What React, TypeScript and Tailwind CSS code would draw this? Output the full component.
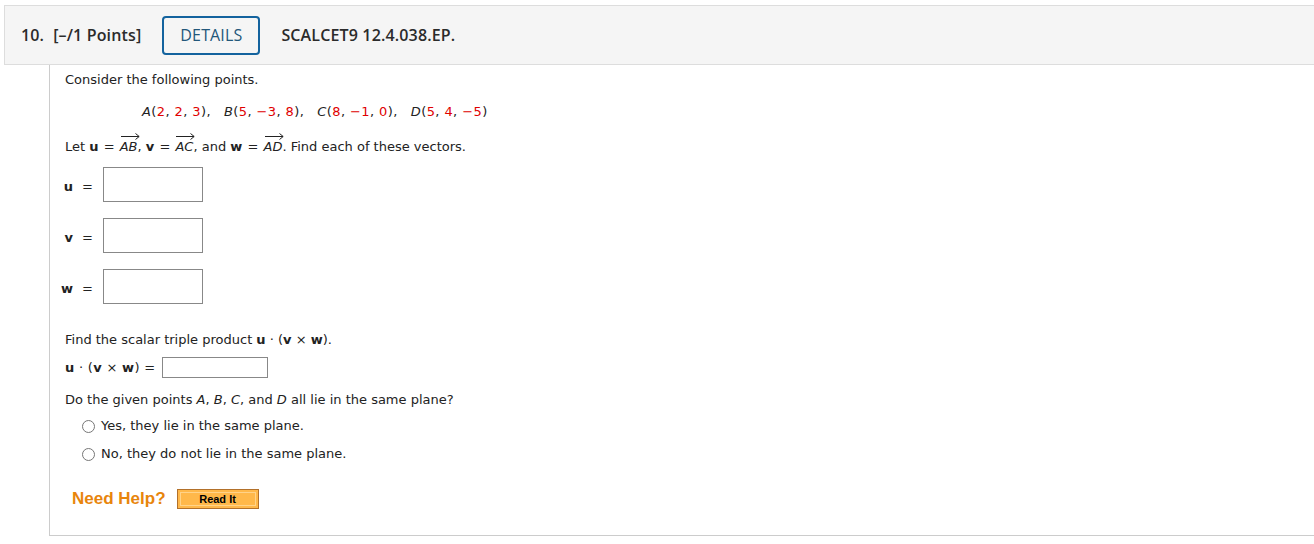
import type { ReactNode } from "react";

function Vec({ children }: { children: ReactNode }) {
  return (
    <span className="relative inline-block italic">
      {children}
      <span className="absolute left-[1px] right-[-1px] top-[-1px] h-px bg-[#222]" />
      <svg className="absolute right-[-2px] top-[-4px] w-[5px] h-[7px]" viewBox="0 0 5 7">
        <path d="M0.5 0.5 L4.2 3.5 L0.5 6.5" fill="none" stroke="#222" strokeWidth="1" />
      </svg>
    </span>
  );
}

function Pt({ name, nums }: { name: string; nums: string[] }) {
  return (
    <span>
      <i>{name}</i>(
      {nums.map((n, i) => (
        <span key={i}>
          <span className="text-[#e00000]">{n}</span>
          {i < nums.length - 1 ? ", " : ""}
        </span>
      ))}
      )
    </span>
  );
}

function Radio({ label }: { label: string }) {
  return (
    <div className="flex items-center h-5 pl-[17px]">
      <span className="w-[13px] h-[13px] rounded-full border border-[#767676] bg-white" />
      <span className="ml-[6px]">{label}</span>
    </div>
  );
}

const BOXES = ["u", "v", "w"];
const POINTS = [
  { name: "A", nums: ["2", "2", "3"] },
  { name: "B", nums: ["5", "−3", "8"] },
  { name: "C", nums: ["8", "−1", "0"] },
  { name: "D", nums: ["5", "4", "−5"] },
];

export default function App() {
  return (
    <div className="w-full overflow-hidden bg-white">
      <div className="w-[1340px] pt-[5px] pl-[4px] font-['DejaVu_Sans',Verdana,sans-serif] text-[13px] text-[#222]">
        {/* Header */}
        <div className="h-[60px] border border-[#dddddd] bg-[#f5f5f5] flex items-center pl-[16px] font-['Open_Sans',sans-serif] text-[16px] font-semibold text-[#2b2b2b] tracking-[0.15px]">
          <span>10.</span>
          <span className="ml-[9px]">[–/1 Points]</span>
          <button className="ml-[21px] w-[98px] h-[39px] border-2 border-[#13639e] rounded-[4px] bg-[#f5f5f5] text-[#22577a] font-normal">
            DETAILS
          </button>
          <span className="ml-[21px]">SCALCET9 12.4.038.EP.</span>
        </div>

        {/* Question body */}
        <div className="ml-[45px] border-l border-b border-[#cccccc] pl-[15px] pt-[5px] pb-[26px] leading-5">
          <p>Consider the following points.</p>
          <p className="mt-[12px] pl-[77px] flex gap-[13px] tracking-[0.4px]">
            {POINTS.map((p, i) => (
              <span key={p.name}>
                <Pt name={p.name} nums={p.nums} />
                {i < POINTS.length - 1 ? "," : ""}
              </span>
            ))}
          </p>
          <p className="mt-[15px]">
            Let <b>u</b> <span className="mx-[1px]">=</span> <Vec>AB</Vec>, <b>v</b> <span className="mx-[1px]">=</span>{" "}
            <Vec>AC</Vec>, and <b>w</b> <span className="mx-[1px]">=</span> <Vec>AD</Vec>. Find each of these vectors.
          </p>

          <div className="mt-[10px] flex flex-col gap-[16px]">
            {BOXES.map((b) => (
              <div key={b} className="flex items-center">
                <span className="w-[38px] pt-[5px] pr-[10px] flex justify-end items-center gap-[9px] whitespace-nowrap">
                  <b>{b}</b>
                  <span>=</span>
                </span>
                <div className="w-[100px] h-[35px] border border-[#888] bg-white" />
              </div>
            ))}
          </div>

          <p className="mt-[26px]">
            Find the scalar triple product <b>u</b> · (<b>v</b> × <b>w</b>).
          </p>
          <div className="mt-[7px] flex items-center">
            <span className="tracking-[0.3px]">
              <b>u</b> · (<b>v</b> × <b>w</b>) =
            </span>
            <div className="ml-[7px] w-[106px] h-[21px] border border-[#888] bg-white" />
          </div>

          <p className="mt-[12px]">
            Do the given points <i>A</i>, <i>B</i>, <i>C</i>, and <i>D</i> all lie in the same plane?
          </p>
          <div className="mt-[6px]">
            <Radio label="Yes, they lie in the same plane." />
          </div>
          <div className="mt-[8px]">
            <Radio label="No, they do not lie in the same plane." />
          </div>

          <div className="mt-[25px] pl-[7px] flex items-center font-['Liberation_Sans',Arial,sans-serif]">
            <span className="text-[17px] font-bold text-[#e8850c]">Need Help?</span>
            <button className="ml-[11px] w-[82px] h-[20px] border border-[#b2702a] bg-[#ffb84a] p-[2px]">
              <span className="flex items-center justify-center h-full border border-[#ffd38a] text-[11px] font-bold text-black leading-none">
                Read It
              </span>
            </button>
          </div>
        </div>
      </div>
    </div>
  );
}
